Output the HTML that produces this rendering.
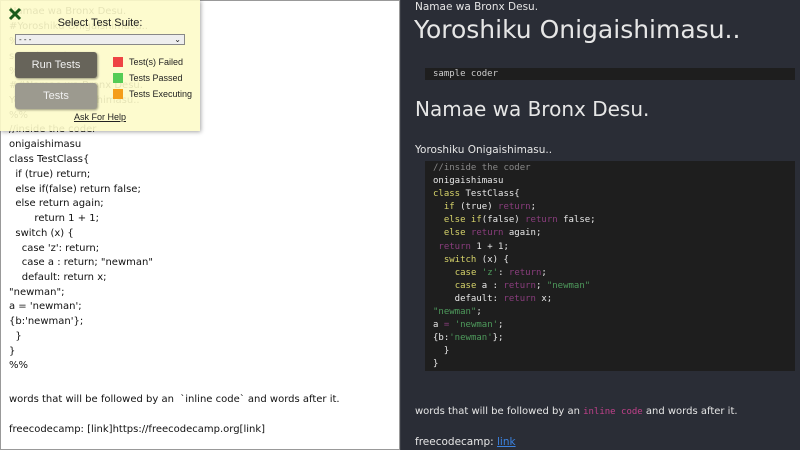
<!DOCTYPE html><html><head><style>
*{margin:0;padding:0;box-sizing:border-box}
body{width:800px;height:450px;overflow:hidden;background:#fff;font-family:"DejaVu Sans",sans-serif;position:relative}
#left{position:absolute;left:0;top:0;width:400px;height:450px;border:1px solid #999;background:#fff}
.l{position:absolute;left:8px;font-size:10px;color:#111;white-space:pre;line-height:14px}
#right{position:absolute;left:400px;top:0;width:400px;height:450px;background:#2a2d36;color:#e6e6e6;border-left:1px solid #3a3d45}
.r{position:absolute;white-space:pre}
.code{position:absolute;left:24px;width:370px;background:#1e1e1e;font-family:"DejaVu Sans Mono",monospace;font-size:9px;color:#e8e8e8}
.k{color:#d6d36a}.rt{color:#8a3d7d}.s{color:#4e9a5c}.c{color:#888}
#panel{position:absolute;left:0;top:0;width:200px;height:131px;background:rgba(253,251,201,.9);box-shadow:1px 1px 4px rgba(0,0,0,.35);font-family:"Liberation Sans",sans-serif;font-size:11px;color:#222}
.btn{position:absolute;left:15px;width:82px;height:26px;border-radius:3px;color:#f0f0f0;font-size:11px;text-align:center;line-height:26px;box-shadow:1px 1px 2px rgba(0,0,0,.4)}
.sq{position:absolute;left:113px;width:10px;height:10px}
.lg{position:absolute;left:129px;font-size:9px}
</style></head><body>
<div id="left">
<div class="l" style="top:4px">Namae wa Bronx Desu.</div>
<div class="l" style="top:19px">#Yoroshiku Onigaishimasu..</div>
<div class="l" style="top:34px">%%</div>
<div class="l" style="top:49px">sample coder</div>
<div class="l" style="top:64px">%%</div>
<div class="l" style="top:78px">##Namae wa Bronx Desu.</div>
<div class="l" style="top:93px">Yoroshiku Onigaishimasu..</div>
<div class="l" style="top:108px">%%</div>
<div class="l" style="top:122px">//inside the coder</div>
<div class="l" style="top:137px">onigaishimasu</div>
<div class="l" style="top:152px">class TestClass{</div>
<div class="l" style="top:167px">  if (true) return;</div>
<div class="l" style="top:182px">  else if(false) return false;</div>
<div class="l" style="top:196px">  else return again;</div>
<div class="l" style="top:211px">        return 1 + 1;</div>
<div class="l" style="top:226px">  switch (x) {</div>
<div class="l" style="top:241px">    case 'z': return;</div>
<div class="l" style="top:255px">    case a : return; "newman"</div>
<div class="l" style="top:270px">    default: return x;</div>
<div class="l" style="top:285px">"newman";</div>
<div class="l" style="top:299px">a = 'newman';</div>
<div class="l" style="top:314px">{b:'newman'};</div>
<div class="l" style="top:329px">  }</div>
<div class="l" style="top:344px">}</div>
<div class="l" style="top:358px">%%</div>
<div class="l" style="top:392px">words that will be followed by an  `inline code` and words after it.</div>
<div class="l" style="top:422px">freecodecamp: [link]https://freecodecamp.org[link]</div>
</div>
<div id="panel">
<svg style="position:absolute;left:8px;top:7px" width="14" height="14" viewBox="0 0 14 14"><path d="M2 2L12 12M12 2L2 12" stroke="#1a5c1a" stroke-width="3"/></svg>
<div style="position:absolute;left:0;width:200px;top:17px;text-align:center">Select Test Suite:</div>
<div style="position:absolute;left:15px;top:34px;width:170px;height:11px;border:1px solid #888;background:#eee;font-size:8px;line-height:9px;padding-left:3px">- - -<span style="position:absolute;right:3px;font-size:8px">&#8964;</span></div>
<div class="btn" style="top:52px;background:#67645a">Run Tests</div>
<div class="btn" style="top:83px;background:#9c9a8f">Tests</div>
<div class="sq" style="top:57px;background:#ee4444"></div><div class="lg" style="top:57px">Test(s) Failed</div>
<div class="sq" style="top:73px;background:#55cc55"></div><div class="lg" style="top:73px">Tests Passed</div>
<div class="sq" style="top:89px;background:#f49d1a"></div><div class="lg" style="top:89px">Tests Executing</div>
<div style="position:absolute;left:0;width:200px;top:112px;text-align:center;font-size:9px;text-decoration:underline">Ask For Help</div>
</div>
<div id="right">
<div class="r" style="left:14px;top:1px;font-size:10.5px">Namae wa Bronx Desu.</div>
<div class="r" style="left:13px;top:15px;font-size:25px">Yoroshiku Onigaishimasu..</div>
<div class="code" style="top:68px;height:12px;line-height:12px;padding-left:8px;color:#ccc">sample coder</div>
<div class="r" style="left:14px;top:97px;font-size:20px">Namae wa Bronx Desu.</div>
<div class="r" style="left:14px;top:144px;font-size:10.5px">Yoroshiku Onigaishimasu..</div>
<div class="code" style="top:161px;height:210px;padding:1px 0 0 8px;line-height:13.1px;white-space:pre"><span class="c">//inside the coder</span>
onigaishimasu
<span class="k">class</span> TestClass{
  <span class="k">if</span> (true) <span class="rt">return</span>;
  <span class="k">else if</span>(false) <span class="rt">return</span> false;
  <span class="k">else</span> <span class="rt">return</span> again;
 <span class="rt">return</span> 1 + 1;
  <span class="k">switch</span> (x) {
    <span class="k">case</span> <span class="s">'z'</span>: <span class="rt">return</span>;
    <span class="k">case</span> a : <span class="rt">return</span>; <span class="s">"newman"</span>
    default: <span class="rt">return</span> x;
<span class="s">"newman"</span>;
a <span class="rt">=</span> <span class="s">'newman'</span>;
{b:<span class="s">'newman'</span>};
  }
}</div>
<div class="r" style="left:14px;top:406px;font-size:10px">words that will be followed by an <span style="font-family:'DejaVu Sans Mono',monospace;font-size:9px;color:#c0408a">inline code</span> and words after it.</div>
<div class="r" style="left:14px;top:436px;font-size:10.5px">freecodecamp: <span style="color:#3b82e0;text-decoration:underline">link</span></div>
</div>
</body></html>
